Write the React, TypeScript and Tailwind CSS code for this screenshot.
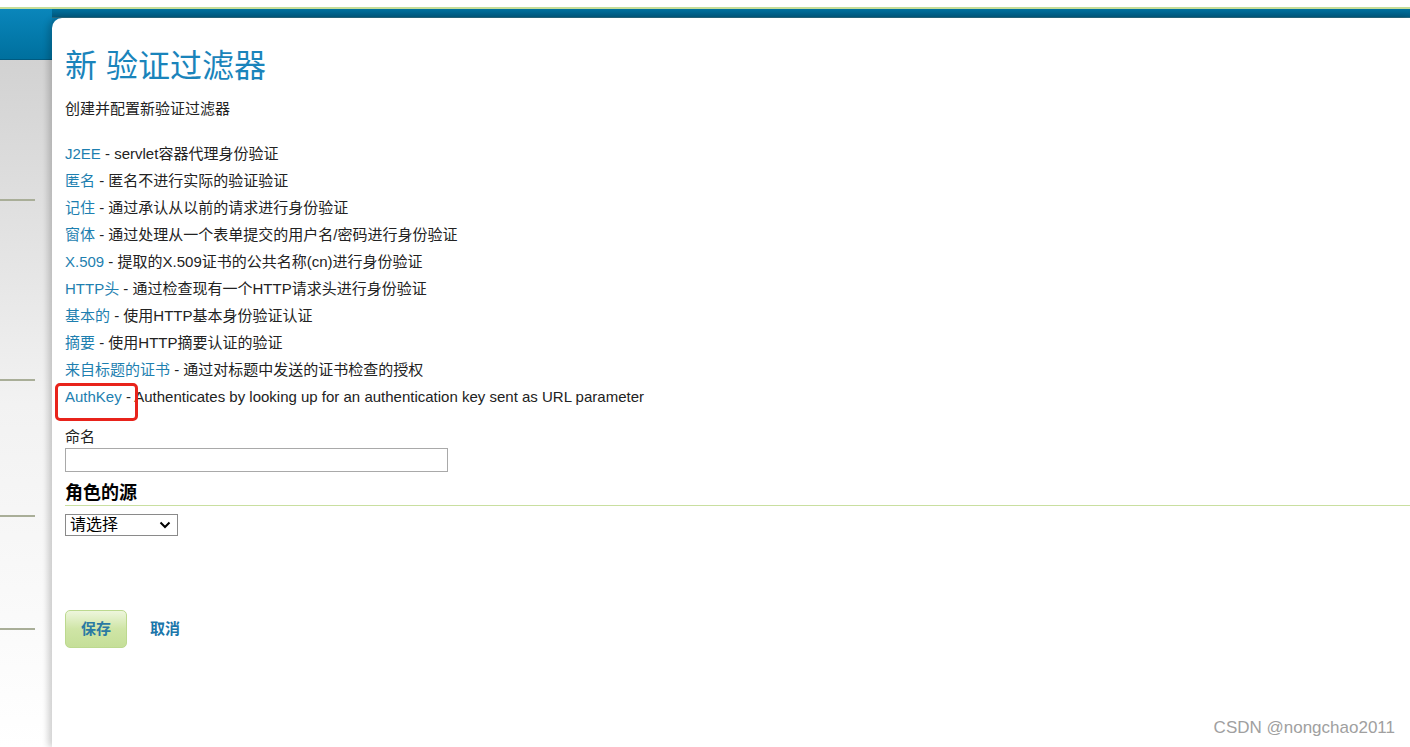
import React from "react";

const items: [string, string][] = [
  ["J2EE", "servlet容器代理身份验证"],
  ["匿名", "匿名不进行实际的验证验证"],
  ["记住", "通过承认从以前的请求进行身份验证"],
  ["窗体", "通过处理从一个表单提交的用户名/密码进行身份验证"],
  ["X.509", "提取的X.509证书的公共名称(cn)进行身份验证"],
  ["HTTP头", "通过检查现有一个HTTP请求头进行身份验证"],
  ["基本的", "使用HTTP基本身份验证认证"],
  ["摘要", "使用HTTP摘要认证的验证"],
  ["来自标题的证书", "通过对标题中发送的证书检查的授权"],
  ["AuthKey", "Authenticates by looking up for an authentication key sent as URL parameter"],
];

export default function App() {
  return (
    <div
      className="relative w-full h-[747px] overflow-hidden bg-white text-[#222]"
      style={{ fontFamily: '"Liberation Sans", "Noto Sans CJK SC", sans-serif' }}
    >
      <div className="h-[7px] bg-white" />
      <div className="h-[2px] bg-[#c6dd98]" />
      <div className="flex h-[738px]">
        {/* sidebar */}
        <div className="w-[52px] shrink-0 flex flex-col">
          <div className="h-[51px] bg-gradient-to-b from-[#0a86bb] to-[#00709e] border-b border-[#005a80]" />
          <div className="flex-1 bg-gradient-to-b from-[#d2d2d2] via-[#f2f2f2] to-white">
            <div className="h-[139px]" />
            <div className="h-[2px] w-[35px] bg-[#a9ae98]" />
            <div className="h-[178px]" />
            <div className="h-[2px] w-[35px] bg-[#a9ae98]" />
            <div className="h-[134px]" />
            <div className="h-[2px] w-[35px] bg-[#a9ae98]" />
            <div className="h-[111px]" />
            <div className="h-[2px] w-[35px] bg-[#a9ae98]" />
          </div>
        </div>
        {/* main */}
        <div className="flex-1 flex flex-col bg-[linear-gradient(to_bottom,#0a82b6_0px,#00709e_40px,#006a95_51px,#d4d4d4_52px,#ffffff_200px)]">
          <div className="h-[9px] bg-gradient-to-b from-[#00709e] to-[#005a80] border-b border-[#2a6a80]" />
          <div className="flex-1 bg-white rounded-tl-[10px] shadow-[-4px_0_6px_rgba(0,0,0,0.18)] pl-[13px] pt-[28px]">
            <h1 className="text-[32px] leading-[40px] text-[#1a84bb] font-normal">新 验证过滤器</h1>
            <p className="mt-[13px] text-[15px] leading-[20px] text-[#222]">创建并配置新验证过滤器</p>
            <ul className="mt-[21px]">
              {items.map(([k, v], i) => (
                <li key={k} className="relative h-[27px] leading-[27px] text-[15px] whitespace-nowrap">
                  <span className="text-[#1e7fb0]">{k}</span>
                  <span> - {v}</span>
                  {i === items.length - 1 && (
                    <span className="absolute left-[-10px] top-0 w-[83px] h-[38px] border-[3px] border-[#e8231b] rounded-[5px]" />
                  )}
                </li>
              ))}
            </ul>
            <label className="block mt-[17px] text-[15px] leading-[20px]">命名</label>
            <div className="mt-px w-[383px] h-[24px] border border-[#a9a9a9] bg-white" />
            <div className="mt-[9px] h-[25px] border-b border-[#c9dfa0]">
              <span className="text-[18px] leading-[24px] font-bold text-black">角色的源</span>
            </div>
            <div className="mt-[8px] w-[113px] h-[22px] border border-[#8a8a8a] flex items-center justify-between pl-[4px] pr-[6px] bg-white">
              <span className="text-[16px] leading-[20px] text-black">请选择</span>
              <svg width="12" height="8" viewBox="0 0 12 8">
                <path d="M1.5 1.5 L6 6 L10.5 1.5" fill="none" stroke="#000" strokeWidth="2" />
              </svg>
            </div>
            <div className="mt-[74px] flex items-center gap-[23px]">
              <div className="w-[62px] h-[38px] rounded-[5px] border border-[#bcd98f] bg-gradient-to-b from-[#eef6dd] via-[#cfe5a6] to-[#c5df98] flex items-center justify-center text-[15px] font-bold text-[#2b7aa3]">
                保存
              </div>
              <span className="text-[15px] font-bold text-[#1b76aa]">取消</span>
            </div>
          </div>
        </div>
      </div>
      <div className="absolute right-[15px] bottom-[7px] text-[17px] text-[#a0a0a0]">CSDN @nongchao2011</div>
    </div>
  );
}
